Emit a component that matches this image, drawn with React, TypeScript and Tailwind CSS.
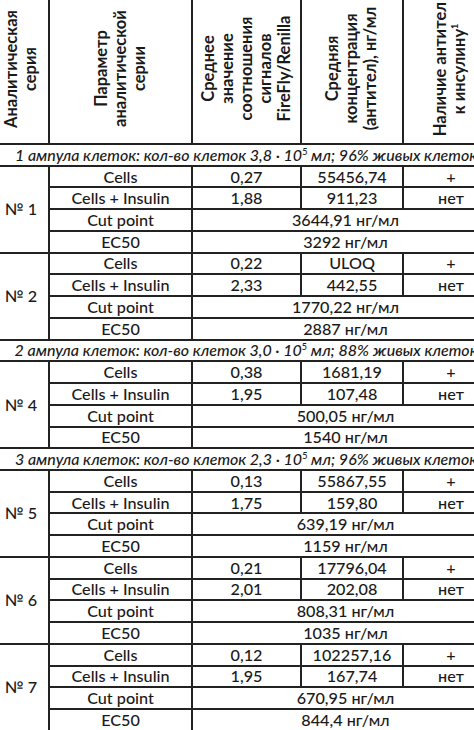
import React from "react";

type Group = {
  n: string;
  cells: [string, string, string];
  ins: [string, string, string];
  cut: string;
  ec: string;
};
type Section = { pre: string; sup: string; post: string; groups: Group[] };

const sections: Section[] = [
  {
    pre: "1 ампула клеток: кол-во клеток 3,8 · 10",
    sup: "5",
    post: " мл; 96% живых клеток",
    groups: [
      { n: "№ 1", cells: ["0,27", "55456,74", "+"], ins: ["1,88", "911,23", "нет"], cut: "3644,91 нг/мл", ec: "3292 нг/мл" },
      { n: "№ 2", cells: ["0,22", "ULOQ", "+"], ins: ["2,33", "442,55", "нет"], cut: "1770,22 нг/мл", ec: "2887 нг/мл" },
    ],
  },
  {
    pre: "2 ампула клеток: кол-во клеток 3,0 · 10",
    sup: "5",
    post: " мл; 88% живых клеток",
    groups: [
      { n: "№ 4", cells: ["0,38", "1681,19", "+"], ins: ["1,95", "107,48", "нет"], cut: "500,05 нг/мл", ec: "1540 нг/мл" },
    ],
  },
  {
    pre: "3 ампула клеток: кол-во клеток 2,3 · 10",
    sup: "5",
    post: " мл; 96% живых клеток",
    groups: [
      { n: "№ 5", cells: ["0,13", "55867,55", "+"], ins: ["1,75", "159,80", "нет"], cut: "639,19 нг/мл", ec: "1159 нг/мл" },
      { n: "№ 6", cells: ["0,21", "17796,04", "+"], ins: ["2,01", "202,08", "нет"], cut: "808,31 нг/мл", ec: "1035 нг/мл" },
      { n: "№ 7", cells: ["0,12", "102257,16", "+"], ins: ["1,95", "167,74", "нет"], cut: "670,95 нг/мл", ec: "844,4 нг/мл" },
    ],
  },
];

const td = "border-2 border-[#222] text-center align-middle p-0 leading-none whitespace-nowrap";
const th = "border-x-2 border-b-2 border-[#222] p-0 align-middle font-bold";

function Vert({ children }: { children: React.ReactNode }) {
  return (
    <div className="h-[148px] w-full flex items-center justify-center">
      <div className="-rotate-90 text-center leading-[19px] whitespace-nowrap text-[16.5px] shrink-0">
        {children}
      </div>
    </div>
  );
}

export default function App() {
  return (
    <div
      className="w-[474px] h-[730px] overflow-hidden bg-white text-[#1a1a1a]"
      style={{ fontFamily: "Lato, 'Noto Sans', sans-serif" }}
    >
      <table className="border-collapse table-fixed w-[506px] ml-[-8px] mt-[-6px] text-[16.2px] font-medium">
        <colgroup>
          <col className="w-[56px]" />
          <col className="w-[143px]" />
          <col className="w-[109px]" />
          <col className="w-[102px]" />
          <col className="w-[96px]" />
        </colgroup>
        <thead>
          <tr className="h-[150px]">
            <th className={th}>
              <Vert>
                Аналитическая
                <br />
                серия
              </Vert>
            </th>
            <th className={th}>
              <Vert>
                Параметр
                <br />
                аналитической
                <br />
                серии
              </Vert>
            </th>
            <th className={th}>
              <Vert>
                Среднее
                <br />
                значение
                <br />
                соотношения
                <br />
                сигналов
                <br />
                FireFly/Renilla
              </Vert>
            </th>
            <th className={th}>
              <Vert>
                Средняя
                <br />
                концентрация
                <br />
                (антител), нг/мл
              </Vert>
            </th>
            <th className={th}>
              <Vert>
                Наличие антител
                <br />
                к инсулину<span className="text-[9px] relative top-[-7px]">1</span>
              </Vert>
            </th>
          </tr>
        </thead>
        <tbody>
          {sections.map((s, si) => (
            <React.Fragment key={si}>
              <tr className="h-[21.74px]">
                <td colSpan={5} className={td + " italic text-[16px]"}>
                  {s.pre}
                  <span className="text-[9px] not-italic relative top-[-6px]">{s.sup}</span>
                  {s.post}
                </td>
              </tr>
              {s.groups.map((g, gi) => (
                <React.Fragment key={gi}>
                  <tr className="h-[21.74px]">
                    <td rowSpan={4} className={td}>
                      {g.n}
                    </td>
                    <td className={td}>Cells</td>
                    <td className={td}>{g.cells[0]}</td>
                    <td className={td}>{g.cells[1]}</td>
                    <td className={td}>{g.cells[2]}</td>
                  </tr>
                  <tr className="h-[21.74px]">
                    <td className={td}>Cells + Insulin</td>
                    <td className={td}>{g.ins[0]}</td>
                    <td className={td}>{g.ins[1]}</td>
                    <td className={td}>{g.ins[2]}</td>
                  </tr>
                  <tr className="h-[21.74px]">
                    <td className={td}>Cut point</td>
                    <td colSpan={3} className={td}>
                      {g.cut}
                    </td>
                  </tr>
                  <tr className="h-[21.74px]">
                    <td className={td}>EC50</td>
                    <td colSpan={3} className={td}>
                      {g.ec}
                    </td>
                  </tr>
                </React.Fragment>
              ))}
            </React.Fragment>
          ))}
        </tbody>
      </table>
    </div>
  );
}
